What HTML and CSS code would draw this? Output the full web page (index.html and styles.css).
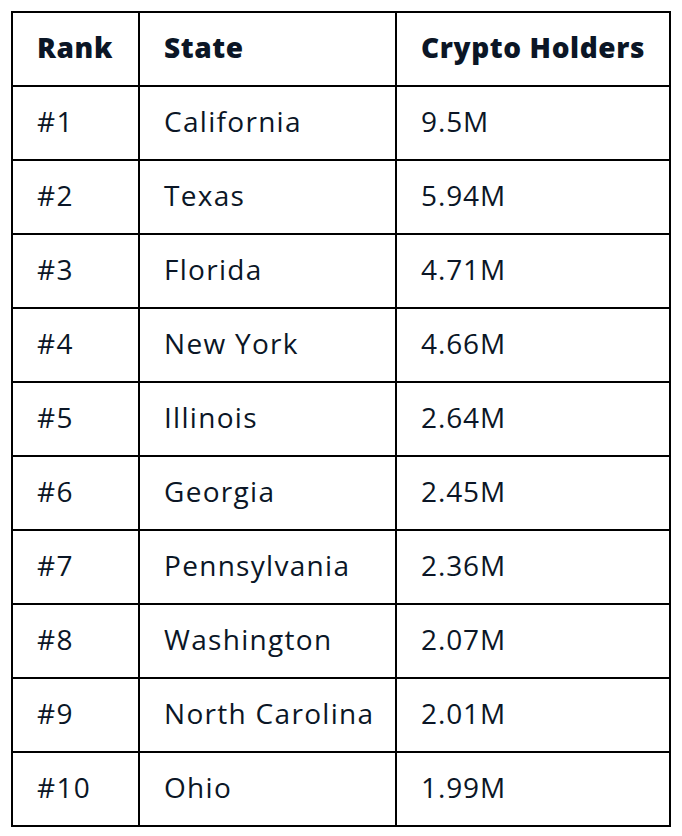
FILE: index.html
```html
<!DOCTYPE html>
<html lang="en">
<head>
<meta charset="utf-8">
<title>Crypto Holders by State</title>
<link rel="stylesheet" href="styles.css">
</head>
<body>
<main class="page">
<table class="rank-table">
  <thead>
    <tr><th class="c-rank">Rank</th><th class="c-state">State</th><th class="c-holders">Crypto Holders</th></tr>
  </thead>
  <tbody>
    <tr><td>#1</td><td>California</td><td class="num">9.5M</td></tr>
    <tr><td>#2</td><td>Texas</td><td class="num">5.94M</td></tr>
    <tr><td>#3</td><td>Florida</td><td class="num">4.71M</td></tr>
    <tr><td>#4</td><td>New York</td><td class="num">4.66M</td></tr>
    <tr><td>#5</td><td>Illinois</td><td class="num">2.64M</td></tr>
    <tr><td>#6</td><td>Georgia</td><td class="num">2.45M</td></tr>
    <tr><td>#7</td><td>Pennsylvania</td><td class="num">2.36M</td></tr>
    <tr><td>#8</td><td>Washington</td><td class="num">2.07M</td></tr>
    <tr><td>#9</td><td>North Carolina</td><td class="num">2.01M</td></tr>
    <tr><td>#10</td><td>Ohio</td><td class="num">1.99M</td></tr>
  </tbody>
</table>
</main>
</body>
</html>
```
FILE: styles.css
```css
html, body {
  margin: 0;
  padding: 0;
  background: #ffffff;
}
.page {
  padding: 11px;
}
.rank-table {
  border-collapse: separate;
  border-spacing: 0;
  table-layout: fixed;
  width: 660px;
  border-top: 2px solid #000;
  border-left: 2px solid #000;
  font-family: "Open Sans", "Liberation Sans", sans-serif;
  color: #0b1626;
}
.rank-table th,
.rank-table td {
  box-sizing: border-box;
  height: 74px;
  padding: 0 0 2px 24px;
  border-right: 2px solid #000;
  border-bottom: 2px solid #000;
  text-align: left;
  vertical-align: middle;
  white-space: nowrap;
  font-size: 28px;
  line-height: 1.2;
}
.rank-table th {
  font-weight: 800;
  letter-spacing: 0.6px;
}
.rank-table td {
  font-weight: 400;
  letter-spacing: 1.3px;
}
.rank-table td.num {
  letter-spacing: 0.9px;
}
.c-rank { width: 127px; }
.c-state { width: 257px; }
.c-holders { width: 274px; }
```
